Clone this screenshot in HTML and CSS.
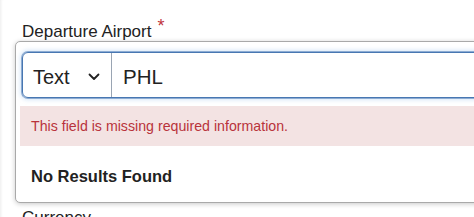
FILE: index.html
```html
<!DOCTYPE html>
<html>
<head>
    <title>Departure Airport</title>
    <link rel="stylesheet" href="styles.css">
</head>
<body>
    <div class="page">
        <div class="field">
            <label class="field-label" for="airportInput">Departure Airport<span class="required">*</span></label>

            <div class="lookup-popup">
                <div class="input-group">
                    <div class="type-select">
                        <span class="type-value">Text</span>
                        <svg class="chevron" width="12" height="8" viewBox="0 0 12 8">
                            <path d="M1.5 1.5 L6 6 L10.5 1.5" fill="none" stroke="#222" stroke-width="1.8" stroke-linecap="round" stroke-linejoin="round"/>
                        </svg>
                    </div>
                    <input type="text" id="airportInput" class="lookup-input" value="PHL">
                </div>

                <div class="error-message">This field is missing required information.</div>

                <div class="no-results">No Results Found</div>
            </div>
        </div>

        <div class="field">
            <label class="field-label">Currency</label>
        </div>
    </div>
</body>
</html>
```

FILE: styles.css
```css
html, body {
    margin: 0;
    padding: 0;
    overflow: hidden;
}

body {
    font-family: "Liberation Sans", Arial, sans-serif;
    background-color: #fff;
    color: #222;
    box-shadow: inset 3px 0 3px -2px rgba(0, 0, 0, 0.08);
    height: 217px;
}

.page {
    padding: 22px 0 0 22px;
}

.field-label {
    display: block;
    font-size: 17px;
    line-height: 19px;
    color: #222;
}

.required {
    color: #c0343c;
    margin-left: 6px;
    font-size: 18px;
    line-height: 0;
    vertical-align: 5px;
}

.lookup-popup {
    margin-left: -7px;
    width: 520px;
    box-sizing: border-box;
    background-color: #fff;
    border: 1px solid #a9a9a9;
    border-radius: 5px;
    box-shadow: 0 1px 5px rgba(0, 0, 0, 0.22);
    padding: 10px 0 16px 4px;
}

.input-group {
    display: flex;
    height: 46px;
    box-sizing: border-box;
    margin-left: 2px;
    border: 1px solid #4877b2;
    border-radius: 6px;
    box-shadow: 0 0 0 1px rgba(72, 119, 178, 0.55), 0 0 4px 2px rgba(140, 185, 235, 0.35);
    overflow: hidden;
}

.type-select {
    width: 89px;
    box-sizing: border-box;
    display: flex;
    align-items: center;
    padding-left: 10px;
    border-right: 1px solid #9aa5b3;
    font-size: 20px;
}

.type-value {
    flex: 1;
    padding-top: 4px;
}

.chevron {
    margin-right: 11px;
    margin-top: 3px;
}

.lookup-input {
    flex: 1;
    border: none;
    outline: none;
    padding: 4px 0 0 11px;
    font-family: "Liberation Sans", Arial, sans-serif;
    font-size: 20.5px;
    color: #222;
    background: transparent;
}

.error-message {
    margin-top: 8px;
    height: 40px;
    line-height: 40px;
    padding-left: 11px;
    background-color: #f3e3e3;
    color: #b9333b;
    font-size: 14.2px;
}

.no-results {
    margin-top: 20px;
    padding-left: 11px;
    font-size: 16.5px;
    font-weight: bold;
    line-height: 20px;
    color: #222;
}

.field + .field {
    margin-top: 5px;
}
```
